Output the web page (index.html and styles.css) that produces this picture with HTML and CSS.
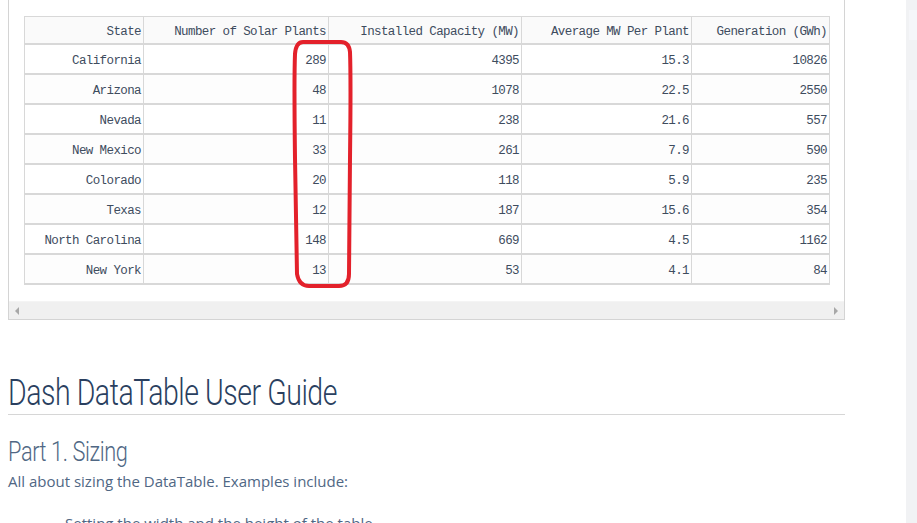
FILE: index.html
```html
<!DOCTYPE html>
<html>
<head>
<meta charset="utf-8">
<link rel="stylesheet" href="styles.css">
</head>
<body>
<div class="page">
  <main class="main">
    <div class="table-box">
      <div class="table-wrap">
        <table class="dt">
          <thead>
            <tr><th class="c1">State</th><th class="c2">Number of Solar Plants</th><th class="c3">Installed Capacity (MW)</th><th class="c4">Average MW Per Plant</th><th class="c5">Generation (GWh)</th></tr>
          </thead>
          <tbody>
            <tr><td>California</td><td>289</td><td>4395</td><td>15.3</td><td>10826</td></tr>
            <tr class="alt"><td>Arizona</td><td>48</td><td>1078</td><td>22.5</td><td>2550</td></tr>
            <tr><td>Nevada</td><td>11</td><td>238</td><td>21.6</td><td>557</td></tr>
            <tr class="alt"><td>New Mexico</td><td>33</td><td>261</td><td>7.9</td><td>590</td></tr>
            <tr><td>Colorado</td><td>20</td><td>118</td><td>5.9</td><td>235</td></tr>
            <tr class="alt"><td>Texas</td><td>12</td><td>187</td><td>15.6</td><td>354</td></tr>
            <tr><td>North Carolina</td><td>148</td><td>669</td><td>4.5</td><td>1162</td></tr>
            <tr class="alt"><td>New York</td><td>13</td><td>53</td><td>4.1</td><td>84</td></tr>
          </tbody>
        </table>
        <svg class="mark" width="64" height="254" viewBox="0 0 64 254">
          <path d="M12 4 H50 Q58 4 59 14 Q60 40 59 120 L58 236 Q58 248 48 248 H18 Q8 248 6 236 L4 120 Q3 40 4 16 Q5 4 12 4 Z" fill="none" stroke="#e3212b" stroke-width="4" stroke-linejoin="round"/>
        </svg>
      </div>
      <div class="hscroll">
        <span class="arrow left"></span>
        <span class="arrow right"></span>
      </div>
    </div>

    <h1 class="title"><span class="title-text">Dash DataTable User Guide</span></h1>
    <h2 class="part"><span class="part-text">Part 1. Sizing</span></h2>
    <p class="lead">All about sizing the DataTable. Examples include:</p>
    <ul class="items">
      <li>Setting the width and the height of the table</li>
    </ul>
  </main>
  <aside class="side">
    <div class="side-block b1"></div>
    <div class="side-block b2"></div>
    <div class="side-block b3"></div>
  </aside>
</div>
</body>
</html>
```

FILE: styles.css
```css
html, body {
  margin: 0;
  padding: 0;
  background: #ffffff;
  overflow: hidden;
}

.page {
  display: flex;
  width: 917px;
  height: 523px;
  overflow: hidden;
}

.main {
  width: 898px;
  padding-left: 8px;
}

.table-box {
  width: 835px;
  border: 1px solid #d4d4d4;
  border-top: none;
}

.table-wrap {
  position: relative;
  padding: 16px 15px 16px 15px;
}

.dt {
  border-collapse: collapse;
  table-layout: fixed;
  width: 805px;
  font-family: "Liberation Mono", "DejaVu Sans Mono", monospace;
  font-size: 12.5px;
  letter-spacing: -0.6px;
  color: #3e4c5e;
}

.dt th, .dt td {
  border: 1px solid #d8d8d8;
  border-bottom-width: 2px;
  text-align: right;
  padding: 3px 2px 0 2px;
  font-weight: normal;
  white-space: nowrap;
  height: 25px;
}

.dt th {
  background: #fafafa;
  height: 23px;
}

.dt tr.alt td {
  background: #fdfdfd;
}

.c1 { width: 114px; }
.c2 { width: 180px; }
.c3 { width: 188px; }
.c4 { width: 165px; }
.c5 { width: 133px; }

.mark {
  position: absolute;
  left: 282px;
  top: 38px;
}

.hscroll {
  position: relative;
  height: 17px;
  background: #f0f0f0;
  border-top: 1px solid #f4f4f4;
}

.arrow {
  position: absolute;
  top: 5px;
  width: 0;
  height: 0;
  border-top: 4px solid transparent;
  border-bottom: 4px solid transparent;
}

.arrow.left {
  left: 6px;
  border-right: 4px solid #a8a8a8;
}

.arrow.right {
  right: 6px;
  border-left: 4px solid #a8a8a8;
}

.title {
  margin: 52px 0 0 0;
  width: 837px;
  font-family: "Roboto", "Liberation Sans", sans-serif;
  font-weight: 300;
  font-size: 37px;
  line-height: 42px;
  color: #2a3f5f;
  padding-bottom: 0;
  border-bottom: 1px solid #d6d6d6;
  white-space: nowrap;
}

.title-text {
  display: inline-block;
  transform: scaleX(0.77);
  transform-origin: left center;
  letter-spacing: -0.6px;
}

.part {
  margin: 21px 0 0 0;
  font-family: "Roboto", "Liberation Sans", sans-serif;
  font-weight: 300;
  font-size: 27px;
  line-height: 32px;
  color: #506784;
  white-space: nowrap;
}

.part-text {
  display: inline-block;
  transform: scaleX(0.806);
  transform-origin: left center;
  letter-spacing: -0.5px;
}

.lead {
  margin: 1px 0 0 0;
  font-family: "Open Sans", "Liberation Sans", sans-serif;
  font-size: 15px;
  line-height: 24px;
  color: #506784;
}

.items {
  margin: 18px 0 0 0;
  padding-left: 57px;
  font-family: "Open Sans", "Liberation Sans", sans-serif;
  font-size: 15px;
  line-height: 24px;
  color: #506784;
  list-style: none;
}

.side {
  width: 11px;
  background: #f1f2f4;
  display: flex;
  flex-direction: column;
  gap: 40px;
  padding-top: 10px;
}

.side-block {
  height: 30px;
  margin-left: 3px;
  background: #f5f6f9;
}
```
